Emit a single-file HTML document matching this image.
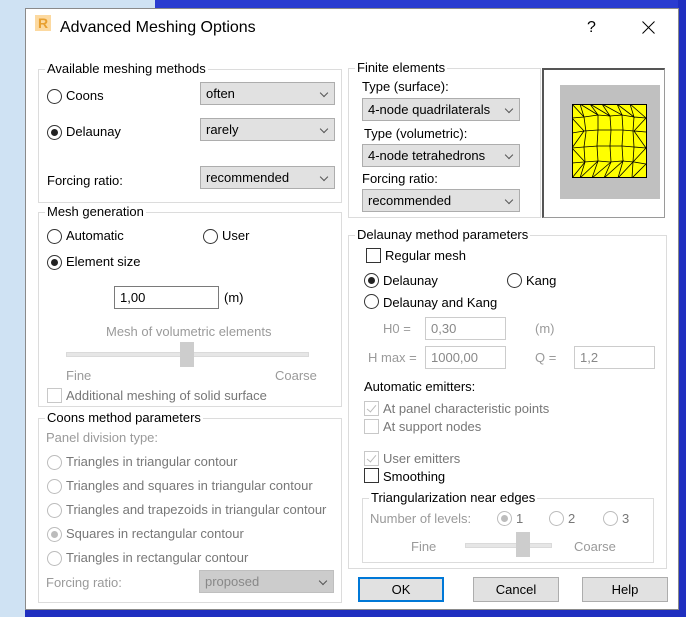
<!DOCTYPE html>
<html><head><meta charset="utf-8"><style>
*{box-sizing:border-box;margin:0;padding:0}
body{width:686px;height:617px;overflow:hidden;position:relative;background:#cfe2f3;font-family:"Liberation Sans",sans-serif;font-size:13px;color:#000}
.a{position:absolute;white-space:nowrap;line-height:14px}
.dis{color:#9a9a9a}
.grp{position:absolute;border:1px solid #dcdcdc}
.lg{position:absolute;background:#fff;padding:0 2px;top:-8px;left:6px;line-height:14px;white-space:nowrap}
.cb{position:absolute;background:#e1e1e1;border:1px solid #adadad;height:23px;padding-left:5px;line-height:21px;white-space:nowrap}
.cb:after{content:"";position:absolute;right:7px;top:7px;width:5px;height:5px;border-right:1px solid #555;border-bottom:1px solid #555;transform:rotate(45deg)}
.rd{position:absolute;width:15px;height:15px;border:1px solid #333;border-radius:50%;background:#fff}
.rd.on:after{content:"";position:absolute;left:3px;top:3px;width:7px;height:7px;border-radius:50%;background:#222}
.rd.d{border-color:#bcbcbc}
.rd.d.on:after{background:#bcbcbc}
.ck{position:absolute;width:15px;height:15px;border:1px solid #333;background:#fff}
.ck.d{border-color:#c8c8c8}
.ck.v:after{content:"";position:absolute;left:4px;top:1px;width:4px;height:8px;border-right:1px solid #bbb;border-bottom:1px solid #bbb;transform:rotate(40deg)}
.in{position:absolute;border:1px solid #7a7a7a;background:#fff;padding-left:5px;line-height:21px;height:23px}
.in.d{border-color:#ccc;color:#888}
.bt{position:absolute;background:#e1e1e1;border:1px solid #adadad;text-align:center;line-height:23px;height:25px}
</style></head><body>
<div class="a" style="left:155px;top:0;width:531px;height:8px;background:#2a3cd0"></div>
<div class="a" style="left:678px;top:0;width:8px;height:617px;background:#1f2fc0"></div>
<div class="a" style="left:25px;top:609px;width:661px;height:8px;background:#1f2fc0"></div>
<div class="a" style="left:25px;top:8px;width:654px;height:602px;background:#fff;border:1px solid #8a8a8a"></div>
<div class="a" style="left:35px;top:15px;width:16px;height:16px;background:#fcd9a0;color:#e8a030;font-weight:bold;font-size:14px;line-height:16px;text-align:center">R</div>
<div class="a" style="left:60px;top:19px;font-size:16px;line-height:18px">Advanced Meshing Options</div>
<div class="a" style="left:587px;top:19px;font-size:16px;line-height:18px">?</div>
<svg class="a" style="left:642px;top:21px" width="13" height="13"><path d="M0.5 0.5 L12.5 12.5 M12.5 0.5 L0.5 12.5" stroke="#000" stroke-width="1"/></svg>

<div class="grp" style="left:38px;top:69px;width:304px;height:134px"><div class="lg">Available meshing methods</div></div>
<div class="rd" style="left:47px;top:89px"></div><div class="a" style="left:66px;top:89px">Coons</div>
<div class="cb" style="left:200px;top:82px;width:135px">often</div>
<div class="rd on" style="left:47px;top:125px"></div><div class="a" style="left:66px;top:125px">Delaunay</div>
<div class="cb" style="left:200px;top:118px;width:135px">rarely</div>
<div class="a" style="left:47px;top:174px">Forcing ratio:</div>
<div class="cb" style="left:200px;top:166px;width:135px">recommended</div>

<div class="grp" style="left:348px;top:68px;width:193px;height:150px"><div class="lg">Finite elements</div></div>
<div class="a" style="left:362px;top:80px">Type (surface):</div>
<div class="cb" style="left:362px;top:98px;width:158px">4-node quadrilaterals</div>
<div class="a" style="left:364px;top:127px">Type (volumetric):</div>
<div class="cb" style="left:362px;top:144px;width:158px">4-node tetrahedrons</div>
<div class="a" style="left:362px;top:172px">Forcing ratio:</div>
<div class="cb" style="left:362px;top:189px;width:158px">recommended</div>
<div class="a" style="left:542px;top:68px;width:123px;height:150px;border:1px solid #9a9a9a;border-left:2px solid #555;border-top:2px solid #555;background:#fff"></div>
<div class="a" style="left:560px;top:85px;width:100px;height:114px;background:#c0c0c0"></div>
<svg class="a" style="left:572px;top:104px" width="75" height="74" viewBox="0 0 75 74"><rect x="0.5" y="0.5" width="74" height="73" fill="#ffff00" stroke="#000"/><g stroke="#000" fill="none" stroke-width="0.8"><path d="M0 14 L12 13 L26 11 L38 12 L50 11 L62 13 L74 14"/><path d="M0 29 L12 27 L26 26 L38 26 L50 26 L62 27 L74 28"/><path d="M0 44 L12 43 L26 42 L38 42 L50 42 L62 43 L74 44"/><path d="M0 59 L12 58 L26 57 L38 58 L50 57 L62 58 L74 60"/><path d="M12 13 L14 28 L12 43 L13 58"/><path d="M26 11 L26 26 L25 42 L26 57"/><path d="M38 12 L39 26 L38 42 L39 58"/><path d="M50 11 L51 26 L50 42 L51 57"/><path d="M62 13 L61 27 L62 43 L61 58"/><path d="M0 0 L12 13 L8 0 L26 11 L18 0 L38 12 L30 0 L50 11 L45 0 L62 13 L58 0 L74 14"/><path d="M0 74 L13 58 L8 74 L26 57 L20 74 L39 58 L32 74 L51 57 L46 74 L61 58 L60 74 L74 60"/><path d="M0 14 L12 27 M0 44 L12 27 M74 14 L62 27 M74 44 L62 27 M0 44 L13 58 M74 44 L61 58"/></g></svg>

<div class="grp" style="left:38px;top:212px;width:304px;height:195px"><div class="lg">Mesh generation</div></div>
<div class="rd" style="left:47px;top:229px"></div><div class="a" style="left:66px;top:229px">Automatic</div>
<div class="rd" style="left:203px;top:229px"></div><div class="a" style="left:222px;top:229px">User</div>
<div class="rd on" style="left:47px;top:255px"></div><div class="a" style="left:66px;top:255px">Element size</div>
<div class="in" style="left:114px;top:286px;width:105px">1,00</div>
<div class="a" style="left:224px;top:291px">(m)</div>
<div class="a dis" style="left:106px;top:325px">Mesh of volumetric elements</div>
<div class="a" style="left:66px;top:352px;width:243px;height:5px;background:#e6e6e6;border:1px solid #dadada"></div>
<div class="a" style="left:180px;top:342px;width:14px;height:25px;background:#cdcdcd"></div>
<div class="a dis" style="left:66px;top:369px">Fine</div>
<div class="a dis" style="left:275px;top:369px">Coarse</div>
<div class="ck d" style="left:47px;top:388px"></div><div class="a" style="left:66px;top:389px;color:#777">Additional meshing of solid surface</div>

<div class="grp" style="left:38px;top:418px;width:304px;height:185px"><div class="lg">Coons method parameters</div></div>
<div class="a dis" style="left:46px;top:431px">Panel division type:</div>
<div class="rd d" style="left:47px;top:455px"></div><div class="a" style="left:66px;top:455px;color:#777">Triangles in triangular contour</div>
<div class="rd d" style="left:47px;top:479px"></div><div class="a" style="left:66px;top:479px;color:#777">Triangles and squares in triangular contour</div>
<div class="rd d" style="left:47px;top:503px"></div><div class="a" style="left:66px;top:503px;color:#777">Triangles and trapezoids in triangular contour</div>
<div class="rd d on" style="left:47px;top:527px"></div><div class="a" style="left:66px;top:527px;color:#777">Squares in rectangular contour</div>
<div class="rd d" style="left:47px;top:551px"></div><div class="a" style="left:66px;top:551px;color:#777">Triangles in rectangular contour</div>
<div class="a dis" style="left:46px;top:576px">Forcing ratio:</div>
<div class="cb" style="left:199px;top:570px;width:135px;background:#ccc;border-color:#bfbfbf;color:#888">proposed</div>

<div class="grp" style="left:348px;top:235px;width:319px;height:334px"><div class="lg">Delaunay method parameters</div></div>
<div class="ck" style="left:366px;top:248px"></div><div class="a" style="left:385px;top:249px">Regular mesh</div>
<div class="rd on" style="left:364px;top:273px"></div><div class="a" style="left:383px;top:274px">Delaunay</div>
<div class="rd" style="left:507px;top:273px"></div><div class="a" style="left:526px;top:274px">Kang</div>
<div class="rd" style="left:364px;top:294px"></div><div class="a" style="left:383px;top:296px">Delaunay and Kang</div>
<div class="a dis" style="left:383px;top:322px">H0 =</div>
<div class="in d" style="left:425px;top:317px;width:81px">0,30</div>
<div class="a dis" style="left:535px;top:322px">(m)</div>
<div class="a dis" style="left:368px;top:351px">H max =</div>
<div class="in d" style="left:425px;top:346px;width:81px">1000,00</div>
<div class="a dis" style="left:535px;top:351px">Q =</div>
<div class="in d" style="left:574px;top:346px;width:81px">1,2</div>
<div class="a" style="left:364px;top:380px">Automatic emitters:</div>
<div class="ck d v" style="left:364px;top:401px"></div><div class="a" style="left:383px;top:402px;color:#777">At panel characteristic points</div>
<div class="ck d" style="left:364px;top:419px"></div><div class="a" style="left:383px;top:420px;color:#777">At support nodes</div>
<div class="ck d v" style="left:364px;top:451px"></div><div class="a" style="left:383px;top:452px;color:#777">User emitters</div>
<div class="ck" style="left:364px;top:468px"></div><div class="a" style="left:383px;top:470px">Smoothing</div>
<div class="grp" style="left:362px;top:498px;width:292px;height:65px"><div class="lg">Triangularization near edges</div></div>
<div class="a dis" style="left:370px;top:512px">Number of levels:</div>
<div class="rd d on" style="left:497px;top:511px"></div><div class="a" style="left:516px;top:512px;color:#777">1</div>
<div class="rd d" style="left:549px;top:511px"></div><div class="a" style="left:568px;top:512px;color:#777">2</div>
<div class="rd d" style="left:603px;top:511px"></div><div class="a" style="left:622px;top:512px;color:#777">3</div>
<div class="a dis" style="left:411px;top:540px">Fine</div>
<div class="a" style="left:465px;top:543px;width:87px;height:5px;background:#e6e6e6;border:1px solid #dadada"></div>
<div class="a" style="left:516px;top:532px;width:14px;height:25px;background:#cdcdcd"></div>
<div class="a dis" style="left:574px;top:540px">Coarse</div>

<div class="bt" style="left:358px;top:577px;width:86px;border:2px solid #0078d7;line-height:21px">OK</div>
<div class="bt" style="left:473px;top:577px;width:86px">Cancel</div>
<div class="bt" style="left:582px;top:577px;width:86px">Help</div>
</body></html>
